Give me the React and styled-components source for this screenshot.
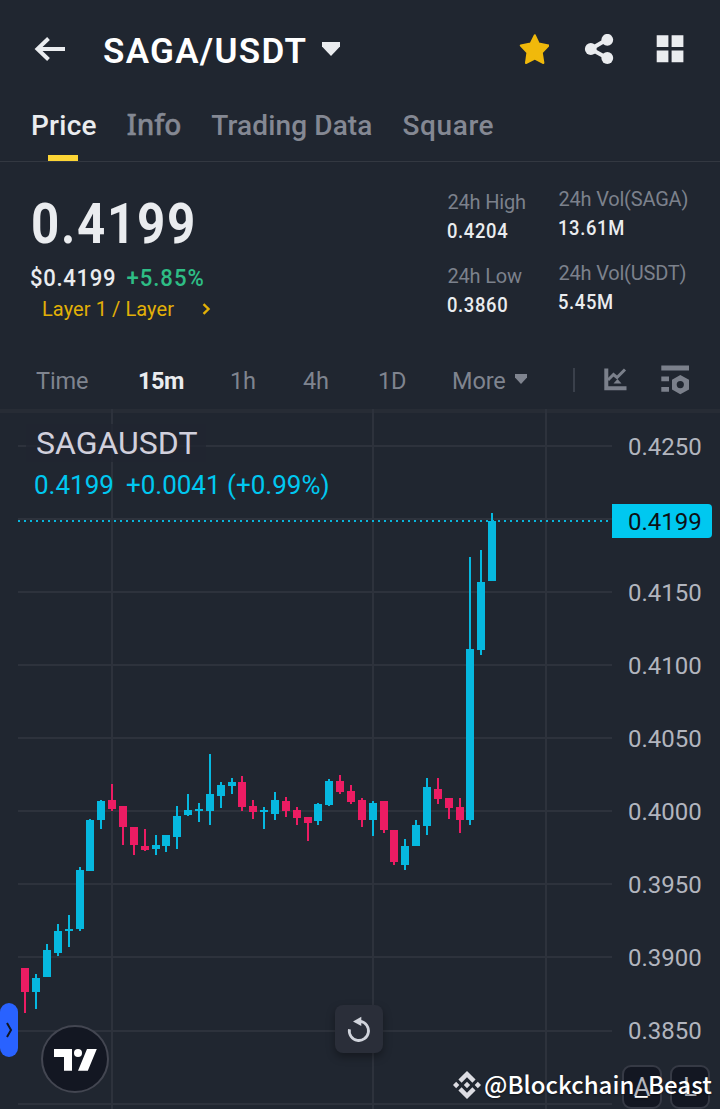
import styled, { createGlobalStyle } from "styled-components"

const GlobalStyle = createGlobalStyle`
  body {
    margin: 0;
    background-color: #202630;
    font-family: Roboto, 'Noto Sans', sans-serif;
  }
`

const Page = styled.div`
  width: 720px;
  height: 1109px;
  overflow: hidden;
  background-color: #202630;
  color: #eaecef;
`

const Header = styled.header`
  display: flex;
  align-items: center;
  height: 98px;
  box-sizing: border-box;
  padding: 0 35px 0 34px;
`

const Title = styled.h1`
  margin: 0 15px 0 37px;
  padding-top: 5px;
  font-size: 35px;
  font-weight: 600;
  line-height: 44px;
  letter-spacing: 1.3px;
  color: #ffffff;
`

const Actions = styled.div`
  display: flex;
  margin-left: auto;
  gap: 35px;

  svg:last-child {
    margin-left: 6px;
  }
`

const Tabs = styled.nav`
  display: flex;
  gap: 30px;
  height: 63px;
  padding-left: 31px;
  border-bottom: 1px solid #333841;
`

const Tab = styled.div`
  display: flex;
  flex-direction: column;
  justify-content: space-between;
  align-items: center;
  font-size: 28px;
  font-weight: 500;
  font-family: ${props => props.$serifI ? "'Noto Sans'" : 'Roboto'}, sans-serif;
  line-height: ${props => props.$serifI ? '53px' : '55px'};
  letter-spacing: ${props => props.$spacing || 0}px;
  -webkit-text-stroke: ${props => props.$serifI ? '0.5px' : '0'};
  color: ${props => props.$active ? '#eaecef' : '#848893'};
`

const Indicator = styled.span`
  width: 30px;
  height: 6px;
  margin-right: 2px;
  background-color: #fcd535;
`

const Summary = styled.section`
  display: grid;
  grid-template-columns: 417px 111px 1fr;
  height: 188px;
  padding-left: 30px;
`

const PriceColumn = styled.div`
  padding-top: 32px;
`

const LastPrice = styled.div`
  padding-left: 1px;
  font-size: 56px;
  font-weight: 700;
  line-height: 60px;
  letter-spacing: 2px;
  transform: scaleX(0.88);
  transform-origin: left;
`

const ChangeRow = styled.div`
  display: flex;
  gap: 11px;
  margin-top: 8px;
  font-size: 24px;
  font-weight: 500;
  line-height: 32px;
  letter-spacing: 0.75px;
  transform: scaleX(0.92);
  transform-origin: left;
`

const Up = styled.span`
  color: #2ebd85;
  letter-spacing: 1.1px;
`

const TagRow = styled.div`
  display: flex;
  align-items: center;
  gap: 28px;
  margin: 2px 0 0 12px;
  font-size: 20px;
  line-height: 26px;
  letter-spacing: 0.08px;
  color: #e2b007;
`

const StatColumn = styled.div`
  padding-top: ${props => props.$top}px;
`

const Stat = styled.div`
  margin-bottom: 16px;
  font-size: 20px;
  line-height: 29px;
  white-space: nowrap;
`

const StatLabel = styled.div`
  padding-left: 0.5px;
  letter-spacing: -0.2px;
  color: #7c818c;
`

const StatValue = styled.div`
  font-weight: 500;
  letter-spacing: 0.7px;
  transform: scaleX(0.92);
  transform-origin: left;
`

const Toolbar = styled.div`
  display: grid;
  grid-template-columns: 102px 92px 73px 75px 74px 121px 31px 57px 30px;
  align-items: center;
  height: 59px;
  padding-left: 36px;
  border-bottom: 4px solid #272c35;
`

const Interval = styled.div`
  display: flex;
  align-items: center;
  gap: 9px;
  padding-top: 3px;
  font-size: 23.5px;
  font-weight: ${props => props.$active ? 700 : 400};
  line-height: 30px;
  letter-spacing: ${props => props.$active ? '-0.5px' : '-0.1px'};
  color: ${props => props.$active ? '#eaecef' : '#7f848f'};

  svg {
    margin-bottom: 4px;
  }
`

const Divider = styled.span`
  width: 2px;
  height: 24px;
  background-color: #3a404b;
`

const Chart = styled.main`
  position: relative;
  display: grid;
  grid-template-columns: 612px 108px;
  height: 700px;
  margin-top: -4px;
`

const Axis = styled.div`
  display: flex;
  flex-direction: column;
  padding-top: 1px;
  font-size: 24px;
  line-height: 34px;
  color: #b2b5be;
`

const AxisRow = styled.div`
  display: flex;
  align-items: center;
  flex: 0 0 73.1px;
`

const AxisLabel = styled.span`
  padding-left: 16px;
`

const LastTag = styled.span`
  width: 84px;
  height: 33px;
  margin-top: 2px;
  padding: 1px 0 0 16px;
  border-radius: 0 4px 4px 0;
  background-color: #00c8f0;
  color: #0c1015;
`

const Legend = styled.div`
  position: absolute;
  top: 15px;
  left: 26px;
`

const LegendSymbol = styled.div`
  width: 170px;
  padding-left: 10px;
  font-size: 32px;
  line-height: 38px;
  color: #d1d0dc;
  background-color: rgba(32, 38, 48, 0.75);
`

const LegendValues = styled.div`
  display: flex;
  gap: 12px;
  margin-top: 5px;
  padding-left: 8px;
  font-size: 26px;
  line-height: 36px;
  color: #00c8f0;
`

const Handle = styled.div`
  position: absolute;
  top: 594px;
  left: 0;
  width: 18px;
  height: 54px;
  border-radius: 9px;
  background-color: #2962ff;
`

const TvBadge = styled.div`
  position: absolute;
  top: 616px;
  left: 41px;
  width: 64px;
  height: 64px;
  border: 2px solid #434651;
  border-radius: 50%;
  background-color: #131722;
`

const ResetButton = styled.div`
  position: absolute;
  top: 596px;
  left: 335px;
  width: 48px;
  height: 48px;
  border-radius: 8px;
  background-color: #2a2e39;
  box-shadow: 0 4px 8px rgba(0, 0, 0, 0.35);
`

const ScaleButtons = styled.div`
  position: absolute;
  top: 656px;
  left: 622px;
  display: flex;
  gap: 8px;
`

const ScaleButton = styled.div`
  box-sizing: border-box;
  width: 40px;
  height: 44px;
  border: 2px solid #363a45;
  border-radius: 9px;
  background-color: #131722;
  font-size: 26px;
  line-height: 40px;
  text-align: center;
  color: #b2b5be;
`

const Watermark = styled.div`
  position: absolute;
  top: 656px;
  left: 453px;
  display: flex;
  align-items: center;
  gap: 3px;
  font-family: 'Noto Sans CJK SC', sans-serif;
  font-size: 24px;
  font-weight: 500;
  line-height: 37px;
  letter-spacing: 0.05px;
  color: #ffffff;
  white-space: nowrap;
  text-shadow: 0 1px 2px rgba(0, 0, 0, 0.5);

  svg {
    margin-top: 2px;
  }
`

const tabs = [
  { label: "Price", active: true, spacing: 0.25 },
  { label: "Info", serifI: true },
  { label: "Trading Data", spacing: 0.12 },
  { label: "Square", spacing: 0.6 },
]

const stats = [
  {
    top: 26,
    items: [
      { label: "24h High", value: "0.4204" },
      { label: "24h Low", value: "0.3860" },
    ],
  },
  {
    top: 23,
    items: [
      { label: "24h Vol(SAGA)", value: "13.61M" },
      { label: "24h Vol(USDT)", value: "5.45M" },
    ],
  },
]

const intervals = ["Time", "15m", "1h", "4h", "1D"]

const axis = ["0.4250", null, "0.4150", "0.4100", "0.4050", "0.4000", "0.3950", "0.3900", "0.3850"]

const gridRows = [446, 519, 592, 665, 738, 811, 884, 957, 1031, 1104]
const gridColumns = [112, 373, 546]

// [x, up, high, body top, body bottom, low]
const candles = [
  [25, 0, 968, 968, 992, 1013],
  [36, 1, 974, 978, 992, 1009],
  [47, 1, 944, 950, 977, 977],
  [58, 1, 924, 931, 953, 956],
  [69, 1, 915, 929, 931, 947],
  [80, 1, 867, 870, 929, 931],
  [90, 1, 819, 820, 871, 871],
  [101, 1, 800, 801, 820, 829],
  [112, 0, 784, 800, 809, 811],
  [123, 0, 806, 806, 827, 845],
  [134, 0, 827, 827, 845, 855],
  [145, 0, 829, 846, 850, 851],
  [156, 1, 835, 845, 849, 855],
  [166, 1, 835, 835, 846, 852],
  [177, 1, 806, 816, 837, 849],
  [188, 1, 794, 810, 815, 816],
  [199, 1, 803, 809, 811, 822],
  [210, 1, 754, 794, 811, 825],
  [221, 1, 782, 785, 796, 808],
  [232, 1, 778, 782, 786, 794],
  [242, 0, 776, 782, 807, 811],
  [253, 0, 800, 806, 812, 819],
  [264, 1, 807, 810, 812, 829],
  [275, 1, 792, 800, 814, 820],
  [286, 0, 797, 801, 811, 817],
  [297, 0, 807, 810, 818, 825],
  [308, 0, 817, 817, 823, 841],
  [318, 1, 803, 804, 821, 825],
  [329, 1, 779, 781, 805, 806],
  [340, 0, 775, 781, 792, 794],
  [351, 0, 785, 791, 802, 804],
  [362, 0, 798, 800, 820, 827],
  [373, 1, 801, 803, 820, 836],
  [384, 0, 801, 801, 830, 833],
  [394, 0, 830, 830, 862, 865],
  [405, 1, 839, 846, 865, 870],
  [416, 1, 820, 825, 846, 846],
  [427, 1, 778, 787, 826, 835],
  [438, 0, 778, 789, 799, 804],
  [449, 0, 798, 798, 808, 819],
  [460, 0, 798, 807, 820, 833],
  [470, 1, 557, 649, 820, 825],
  [481, 1, 550, 582, 650, 655],
  [492, 1, 513, 521, 581, 581],
]

const Candles = () => (
  <svg width="612" height="700" viewBox="0 409 612 700" shapeRendering="crispEdges">
    {gridColumns.map((x) => <rect key={x} x={x - 1} y="409" width="2" height="700" fill="#2d323c" />)}
    {gridRows.map((y) => <rect key={y} x="18" y={y - 1} width="594" height="2" fill="#2d323c" />)}
    <line x1="18" x2="612" y1="521" y2="521" stroke="#08b5dc" strokeWidth="2" strokeDasharray="2 4" />
    {candles.map(([x, up, high, top, bottom, low]) => (
      <g key={x} fill={up ? "#06b8df" : "#ec1c63"}>
        <rect x={x - 1} y={high} width="2" height={low - high} />
        <rect x={x - 4} y={top} width="8" height={bottom - top} />
      </g>
    ))}
  </svg>
)

const App = () => {
  return (
    <Page>
      <GlobalStyle />

      <Header>
        <svg width="32" height="28" viewBox="0 0 32 28" fill="none" stroke="#eaecef" strokeWidth="4">
          <path d="M31 14H4M14.5 3.5L3.5 14L14.5 24.5" />
        </svg>
        <Title>SAGA/USDT</Title>
        <svg width="18" height="14" viewBox="0 0 18 14" fill="#eaecef">
          <path d="M0 0H18V4.5L9 14L0 4.5Z" />
        </svg>
        <Actions>
          <svg width="30" height="30" viewBox="0 0 30 30" fill="#f0b90b" stroke="#f0b90b" strokeWidth="2" strokeLinejoin="round">
            <path d="M15.8 1.2L19.8 9.6L29.6 11.5L22.8 18.6L24.4 29L15.8 24.6L7 29L8.4 18.6L1.8 11.5L11.6 9.6Z" />
          </svg>
          <svg width="30" height="30" viewBox="0 0 30 30" fill="#eaecef" stroke="#eaecef">
            <path d="M23 5.5L6.8 15L23 24" fill="none" strokeWidth="4" />
            <g stroke="none">
              <circle cx="6.8" cy="15" r="5.9" />
              <circle cx="23.3" cy="5.8" r="5.9" />
              <circle cx="23.3" cy="24" r="5.9" />
            </g>
          </svg>
          <svg width="30" height="30" viewBox="0 0 30 30" fill="#eaecef">
            <path d="M1.7 1.3h11.7v11.8H1.7zM16.6 1.3h11.8v11.8H16.6zM1.7 16.4h11.7v11.8H1.7zM16.6 16.4h11.8v11.8H16.6z" />
          </svg>
        </Actions>
      </Header>

      <Tabs>
        {tabs.map((tab) => (
          <Tab key={tab.label} $active={tab.active} $spacing={tab.spacing} $serifI={tab.serifI}>
            {tab.label}
            {tab.active && <Indicator />}
          </Tab>
        ))}
      </Tabs>

      <Summary>
        <PriceColumn>
          <LastPrice>0.4199</LastPrice>
          <ChangeRow>
            <span>$0.4199</span>
            <Up>+5.85%</Up>
          </ChangeRow>
          <TagRow>
            <span>Layer 1 / Layer</span>
            <svg width="9" height="12" viewBox="0 0 9 12" fill="none" stroke="#e2b007" strokeWidth="2.4">
              <path d="M1.5 1.2L6.5 6L1.5 10.8" />
            </svg>
          </TagRow>
        </PriceColumn>
        {stats.map((column) => (
          <StatColumn key={column.top} $top={column.top}>
            {column.items.map((item) => (
              <Stat key={item.label}>
                <StatLabel>{item.label}</StatLabel>
                <StatValue>{item.value}</StatValue>
              </Stat>
            ))}
          </StatColumn>
        ))}
      </Summary>

      <Toolbar>
        {intervals.map((name) => <Interval key={name} $active={name === "15m"}>{name}</Interval>)}
        <Interval>
          More
          <svg width="12" height="10" viewBox="0 0 12 10" fill="#7f848f">
            <path d="M0 0H12V3.5L6 10L0 3.5Z" />
          </svg>
        </Interval>
        <Divider />
        <svg width="23" height="23" viewBox="0 0 23 23" fill="none" stroke="#7b808b">
          <path d="M2.3 0.5V20.2H22.5" strokeWidth="4" />
          <path d="M4 12L9.5 6.5L13 9.5L21 1.5" strokeWidth="3" />
          <path d="M13.5 11L17.5 15.5H9.5Z" fill="#7b808b" stroke="none" />
        </svg>
        <svg width="29" height="30" viewBox="0 0 29 30" fill="#7b808b">
          <path d="M0.3 0.5H28V5.5H0.3zM0.3 11.5H8V16.2H0.3zM0.3 22H8V26.7H0.3z" />
          <path fillRule="evenodd" d="M19.3 10L28 14.8V24.4L19.3 29.2L11 24.4V14.8ZM19.3 16A3.6 3.6 0 1 0 19.3 23.2A3.6 3.6 0 1 0 19.3 16Z" />
        </svg>
      </Toolbar>

      <Chart>
        <Candles />
        <Axis>
          {axis.map((price, i) => (
            <AxisRow key={i}>
              {price ? <AxisLabel>{price}</AxisLabel> : <LastTag>0.4199</LastTag>}
            </AxisRow>
          ))}
        </Axis>

        <Legend>
          <LegendSymbol>SAGAUSDT</LegendSymbol>
          <LegendValues>
            <span>0.4199</span>
            <span>+0.0041 (+0.99%)</span>
          </LegendValues>
        </Legend>

        <Handle>
          <svg width="18" height="54" viewBox="0 0 18 54" fill="none" stroke="#131722" strokeWidth="2">
            <path d="M7 20L11 27L7 34" />
          </svg>
        </Handle>

        <TvBadge>
          <svg width="64" height="64" viewBox="43 1027 64 64" fill="#ffffff">
            <path d="M54 1049H72V1070.7H64V1057H54ZM87 1049H96.8L87.8 1070.7H78Z" />
            <circle cx="78" cy="1053" r="4" />
          </svg>
        </TvBadge>

        <ResetButton>
          <svg width="48" height="48" viewBox="335 1005 48 48">
            <path d="M349.4 1029.3A9.6 9.6 0 1 0 360.5 1021.4" fill="none" stroke="#d1d4dc" strokeWidth="2.8" />
            <path d="M353 1021.5L361.3 1016.7V1026Z" fill="#d1d4dc" />
          </svg>
        </ResetButton>

        <ScaleButtons>
          <ScaleButton>A</ScaleButton>
          <ScaleButton>L</ScaleButton>
        </ScaleButtons>

        <Watermark>
          <svg width="28" height="28" viewBox="0 0 24 24" fill="#dcdce2">
            <path d="M16.62 13.92l2.72 2.72L12 23.99l-7.36-7.35 2.72-2.72L12 18.58zM21.26 9.28L24 12l-2.72 2.72L18.57 12zM12 9.28L14.7 12 12 14.7 9.27 12zM2.72 9.28L5.41 12l-2.69 2.69L0 12zM12 0l7.34 7.34-2.72 2.72L12 5.42l-4.64 4.66-2.72-2.72z" />
          </svg>
          @Blockchain_Beast
        </Watermark>
      </Chart>
    </Page>
  )
}

export default App
